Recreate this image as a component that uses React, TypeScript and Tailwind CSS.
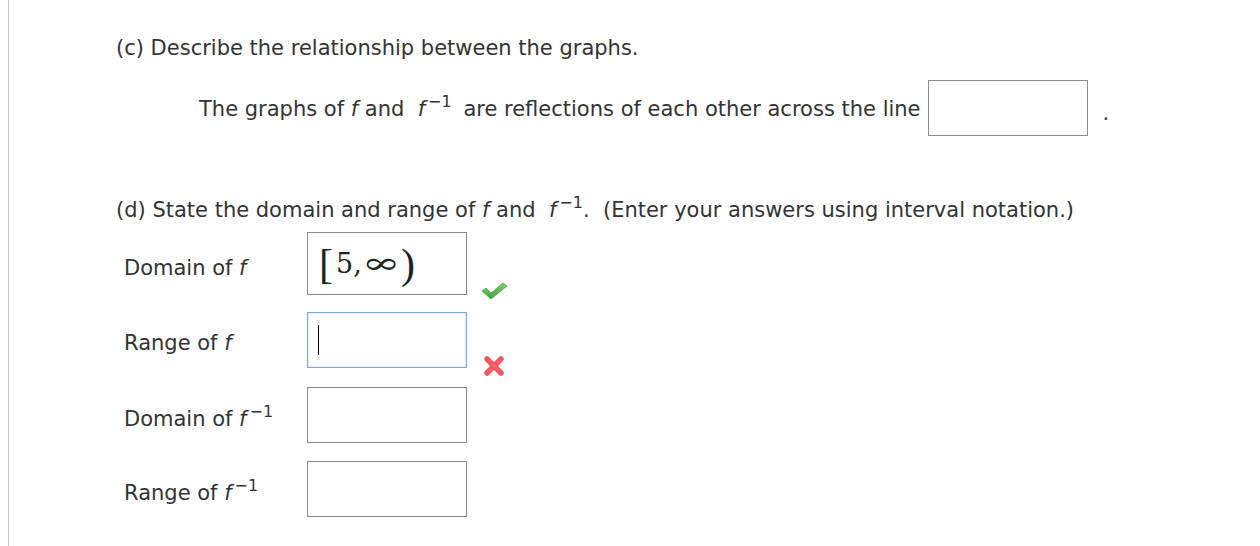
import React from 'react';

const font = { fontFamily: '"DejaVu Sans", Verdana, sans-serif' };
const serif = { fontFamily: '"DejaVu Serif", "Liberation Serif", serif' };
const libSerif = { fontFamily: '"Liberation Serif", serif' };

function Finv() {
  return (
    <span className="whitespace-nowrap">
      <i>f</i>
      <span className="relative top-[-9px] ml-[3px] text-[16px]">−1</span>
    </span>
  );
}

function Check() {
  return (
    <svg width="28" height="20" viewBox="0 0 28 20">
      <defs>
        <linearGradient id="g" x1="0" y1="0" x2="0" y2="1">
          <stop offset="0" stopColor="#7fd36f" />
          <stop offset="1" stopColor="#3e9e3a" />
        </linearGradient>
      </defs>
      <path d="M2 10 L6 7 L11 12 L23 2 L27 5 L11 18 Z" fill="url(#g)" stroke="#4aa844" strokeWidth="0.8" strokeLinejoin="round" />
    </svg>
  );
}

function Cross() {
  return (
    <svg width="22" height="22" viewBox="0 0 22 22">
      <path d="M4 4 L18 18 M18 4 L4 18" stroke="#f2545e" strokeWidth="5.5" strokeLinecap="round" />
      <path d="M5 5 L17 17 M17 5 L5 17" stroke="#ff6e76" strokeWidth="2" strokeLinecap="round" opacity="0.6" />
    </svg>
  );
}

export default function App() {
  const box = 'w-[160px] h-[56px] border border-[#8a8a8a] bg-white';
  const label = 'w-[183px] text-[21px] leading-[26px]';
  return (
    <div className="relative min-h-[546px] bg-white text-[#333]" style={font}>
      <div className="absolute left-[8px] top-0 h-[546px] w-px bg-[#c8c8c8]" />
      <div className="pl-[116px] pt-[35px]">
        <p className="text-[21px] leading-[26px]">(c) Describe the relationship between the graphs.</p>

        <div className="mt-[19px] flex items-center pl-[83px] text-[21px] leading-[26px]">
          <span className="mt-[4px]">
            The graphs of <i>f</i> and&nbsp;&nbsp;<Finv />
            <span className="inline-block w-[5px]" /> are reflections of each other across the line
          </span>
          <div className={`${box} ml-[7px]`} />
          <span className="ml-[15px] mt-[10px]">.</span>
        </div>

        <p className="mt-[61px] text-[21px] leading-[26px]">
          (d) State the domain and range of <i>f</i> and&nbsp;&nbsp;<Finv />. &nbsp;(Enter your answers using interval notation.)
        </p>

        <div className="mt-[7px] flex flex-col pl-[8px]">
          <div className="flex items-center">
            <div className={`${label} mt-[8px]`}>
              Domain of <i>f</i>
            </div>
            <div className="flex h-[63px] w-[160px] items-center border border-[#8a8a8a] pl-[11px] text-[#222]" style={serif}>
              <span className="text-[42px] leading-none" style={libSerif}>[</span>
              <span className="ml-[3px] text-[27px] leading-none">5,</span>
              <span className="ml-[7px] mr-[8px] inline-block scale-x-[160%] text-[29px] leading-none">∞</span>
              <span className="text-[42px] leading-none" style={libSerif}>)</span>
            </div>
            <div className="ml-[13px] translate-y-[6px] self-end">
              <Check />
            </div>
          </div>

          <div className="mt-[17px] flex items-center">
            <div className={`${label} mt-[6px]`}>
              Range of <i>f</i>
            </div>
            <div className="flex h-[56px] w-[160px] items-center border border-[#78a9dc] pl-[10px] shadow-[inset_0_0_3px_rgba(120,169,220,0.45)]">
              <div className="h-[30px] w-px bg-black" />
            </div>
            <div className="ml-[16px] translate-y-[9px] self-end">
              <Cross />
            </div>
          </div>

          <div className="mt-[19px] flex items-center">
            <div className={`${label} mt-[10px]`}>
              Domain of <Finv />
            </div>
            <div className={box} />
          </div>

          <div className="mt-[18px] flex items-center">
            <div className={`${label} mt-[10px]`}>
              Range of <Finv />
            </div>
            <div className={box} />
          </div>
        </div>
      </div>
    </div>
  );
}
